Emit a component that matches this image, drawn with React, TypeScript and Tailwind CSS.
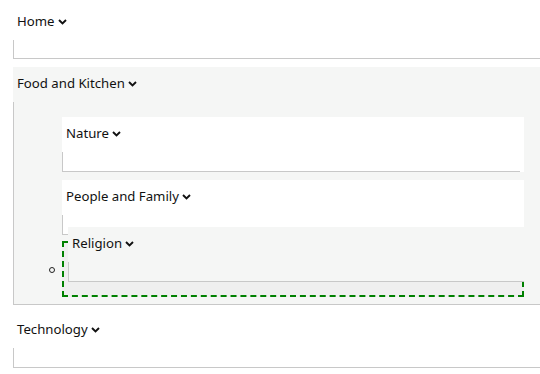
function Chevron() {
  return (
    <svg width="9" height="6" viewBox="0 0 9 6" className="ml-[3px] mt-[2px]">
      <polyline points="1,1 4.5,4.5 8,1" fill="none" stroke="#111" strokeWidth="1.9" />
    </svg>
  );
}

function Heading({ label }: { label: string }) {
  return (
    <div className="flex h-[35px] items-start pl-1 pt-[6px]">
      <span className="flex items-center leading-5">
        {label}
        <Chevron />
      </span>
    </div>
  );
}

function Item({ label }: { label: string }) {
  return (
    <div className="ml-[48px] mr-4 bg-white">
      <Heading label={label} />
      <div className="mr-1 h-5 border-b border-l border-[#c8c8c8]"></div>
    </div>
  );
}

export default function App() {
  return (
    <div className="h-[374px] w-[540px] overflow-hidden bg-white pl-[13px] pt-[5px] text-[13.2px] text-[#111]" style={{ fontFamily: '"Noto Sans", sans-serif' }}>
      <div>
        <Heading label="Home" />
        <div className="h-[19px] border-b border-l border-[#c8c8c8]"></div>
      </div>

      <div className="mt-2 bg-[#f5f6f5]">
        <Heading label="Food and Kitchen" />
        <div className="flex flex-col gap-2 border-b border-l border-[#c8c8c8] pb-[7px] pt-[15px]">
          <Item label="Nature" />
          <Item label="People and Family" />
          <div className="relative -mt-[2px] ml-[48px] mr-4 h-[56px] border-2 border-dashed border-[#008000] bg-[#efefef]">
            <span className="absolute -left-[15px] top-[24px] h-[6px] w-[6px] rounded-full border border-[#222]"></span>
            <div className="-mr-1 ml-1 -mt-4 bg-[#f5f6f5]">
              <Heading label="Religion" />
              <div className="mr-[2px] h-5 border-b border-l border-[#c8c8c8]"></div>
            </div>
          </div>
        </div>
      </div>

      <div className="mt-2">
        <Heading label="Technology" />
        <div className="h-5 border-b border-l border-[#c8c8c8]"></div>
      </div>
    </div>
  );
}
